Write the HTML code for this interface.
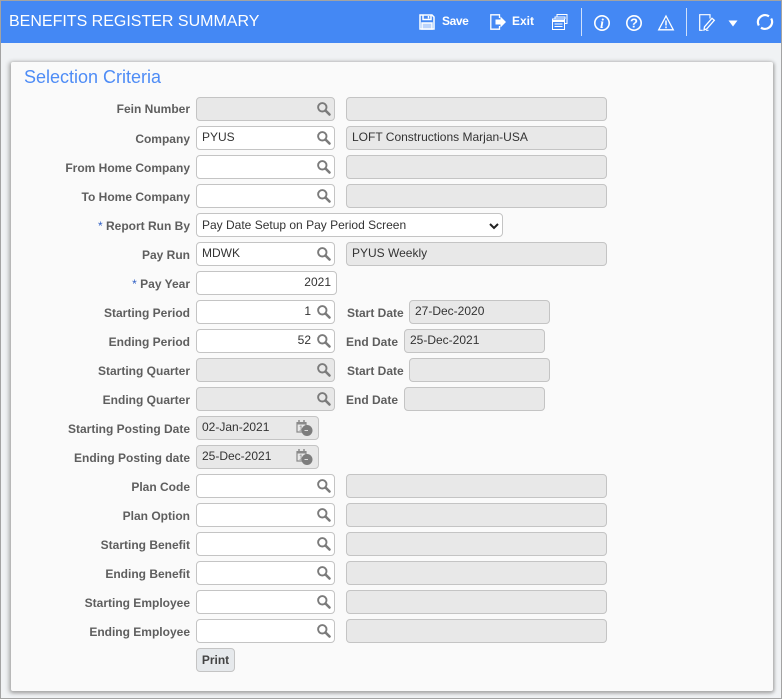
<!DOCTYPE html>
<html><head><meta charset="utf-8"><style>
html,body{margin:0;padding:0}
body{width:782px;height:699px;position:relative;overflow:hidden;background:#f0f2f4;font-family:"Liberation Sans",sans-serif}
.frame{position:absolute;left:0;top:0;width:780px;height:697px;border:1px solid #a3a3a3;pointer-events:none;z-index:5}
.hdr{position:absolute;left:1px;top:1px;width:780px;height:42px;background:#4488f4}
.title{position:absolute;left:9px;top:13px;font-size:16px;color:#fff;white-space:nowrap;line-height:18px}
.panel{position:absolute;left:11px;top:62px;width:762px;height:629px;background:#fafafa;border-radius:2px;box-shadow:-1px 1px 4px 1px #aaa,1px 1px 3px #aaa}
.sc{position:absolute;left:24px;top:67px;font-size:18px;line-height:20px;color:#4e8cf6;white-space:nowrap}
.l{position:absolute;font-size:12px;font-weight:bold;color:#5e5e5e;line-height:14px;white-space:nowrap;text-align:right}
.l.m{width:190px;left:0}
.l i{font-style:normal;color:#2f5fc4;font-weight:normal}
.f{position:absolute;box-sizing:border-box;height:24px;border:1px solid #c4c4c4;border-radius:4px;background:#fff;font-size:12px;line-height:21px;color:#333;padding:0 5px;white-space:nowrap;overflow:hidden}
.g{background:#e8e8e8}
.r{text-align:right;padding-right:5px}
.s{left:196px;width:139px}
.w{left:346px;width:261px}
.v{position:absolute;color:#fff;font-size:12px;font-weight:bold;line-height:14px;top:14px}
.sep{position:absolute;top:8px;width:1px;height:28px;background:#cfe0fb}
svg{position:absolute;overflow:visible}
</style></head><body>
<div class="hdr"></div>
<div class="title">BENEFITS REGISTER SUMMARY</div>

<svg style="left:419px;top:14px" width="16" height="16" viewBox="0 0 16 16" fill="none" stroke="#fff" stroke-width="1.500"><path d="M1 1h12l2 2v12H1z"/><path d="M4 1v4.500h8V1"/><path d="M9.500 2v2.500"/><rect x="3" y="9" width="10" height="6" fill="#bcd4fb" stroke="#fff"/></svg>
<div class="v" style="left:442px;letter-spacing:-.4px">Save</div>
<svg style="left:490px;top:14px" width="17" height="16" viewBox="0 0 17 16" fill="none"><path d="M9.500 4V.8H.8v14.400h8.700V12" stroke="#fff" stroke-width="1.300"/><path d="M5.500 5.500h5V2.500L16 8l-5.500 5.500v-3h-5z" fill="#fff"/></svg>
<div class="v" style="left:512px">Exit</div>
<svg style="left:552px;top:14px" width="16" height="16" viewBox="0 0 16 16" fill="none" stroke="#fff" stroke-width="1"><path d="M5 3V.5h10v9h-2"/><path d="M3 5V3h10v2"/><rect x=".5" y="5" width="12" height="10.500" fill="#4488f4"/><path d="M.5 7h12" stroke-width="2"/><path d="M2.500 10h8M2.500 12.500h8"/></svg>
<div class="sep" style="left:581px"></div>
<svg style="left:594px;top:15px" width="16" height="16" viewBox="0 0 16 16" fill="none"><circle cx="8" cy="8" r="7.200" stroke="#fff" stroke-width="1.600"/><text x="8" y="13" font-family="Liberation Serif,serif" font-style="italic" font-weight="bold" font-size="14" fill="#fff" text-anchor="middle">i</text></svg>
<svg style="left:626px;top:15px" width="16" height="16" viewBox="0 0 16 16" fill="none"><circle cx="8" cy="8" r="7.200" stroke="#fff" stroke-width="1.600"/><text x="8" y="12.700" font-family="Liberation Sans,sans-serif" font-weight="bold" font-size="13" fill="#fff" text-anchor="middle">?</text></svg>
<svg style="left:658px;top:15px" width="16" height="16" viewBox="0 0 16 16" fill="none"><path d="M8 1 15.300 14.800H.7z" stroke="#fff" stroke-width="1.300"/><path d="M8 5.500v5M8 11.500v1.800" stroke="#fff" stroke-width="1.500"/></svg>
<div class="sep" style="left:686px"></div>
<svg style="left:699px;top:14px" width="16" height="17" viewBox="0 0 16 17" fill="none" stroke="#fff" stroke-width="1.200"><path d="M11 4.500V.7H.7v15.600h3"/><path d="M5 16 5.500 12.800 13 4.300l2.300 2-7.500 8.500z" stroke-width="1.300"/><path d="M9.500 16.300h-2.500" stroke-width="1"/></svg>
<svg style="left:728px;top:20px" width="10" height="7" viewBox="0 0 10 7"><path d="M.5 .5h9L5 6.500z" fill="#fff"/></svg>
<svg style="left:757px;top:14px" width="16" height="16" viewBox="0 0 16 16" fill="none" stroke="#fff" stroke-width="2.200"><path d="M1.800 11.500A6.800 6.800 0 0 1 4 2.400 7 7 0 0 1 12 2.300"/><path d="M14.200 4.500A6.800 6.800 0 0 1 12 13.600 7 7 0 0 1 4 13.700"/></svg>

<div class="panel"></div>
<div class="sc">Selection Criteria</div>

<svg width="0" height="0" style="position:absolute"><defs><g id="mag"><circle cx="5.300" cy="5.300" r="4.200" fill="none" stroke="#7b7b7b" stroke-width="1.900"/><path d="M8.500 8.500l4 4" stroke="#7b7b7b" stroke-width="2.600" stroke-linecap="round"/></g>
<g id="cal"><path d="M1 3h9v9H1z" fill="none" stroke="#8a8a8a" stroke-width="1.200"/><path d="M.5 2h10v2.500H.5z" fill="#8a8a8a"/><path d="M3 0v3M8 0v3" stroke="#8a8a8a" stroke-width="1.500"/><text x="3" y="10.500" font-size="7" font-family="Liberation Sans,sans-serif" fill="#777">1</text><circle cx="11" cy="10.500" r="5.500" fill="#7d7d7d"/><path d="M8.500 10.500h3.500" stroke="#ddd" stroke-width="1"/></g></defs></svg>

<div class="l m" style="top:102px">Fein Number</div>
<div class="f s g" style="top:97px"></div><div class="f w g" style="top:97px"></div>
<div class="l m" style="top:132px">Company</div>
<div class="f s" style="top:126px">PYUS</div><div class="f w g" style="top:126px">LOFT Constructions Marjan-USA</div>
<div class="l m" style="top:161px">From Home Company</div>
<div class="f s" style="top:155px"></div><div class="f w g" style="top:155px"></div>
<div class="l m" style="top:190px">To Home Company</div>
<div class="f s" style="top:184px"></div><div class="f w g" style="top:184px"></div>
<div class="l m" style="top:219px"><i>*</i> Report Run By</div>
<div class="f" style="top:213px;left:196px;width:307px;line-height:22px">Pay Date Setup on Pay Period Screen</div>
<svg style="left:489px;top:223px" width="10" height="6" viewBox="0 0 10 6"><path d="M1 1l4 4 4-4" fill="none" stroke="#222" stroke-width="2"/></svg>
<div class="l m" style="top:248px">Pay Run</div>
<div class="f s" style="top:242px">MDWK</div><div class="f w g" style="top:242px">PYUS Weekly</div>
<div class="l m" style="top:277px"><i>*</i> Pay Year</div>
<div class="f r" style="top:271px;left:196px;width:141px">2021</div>
<div class="l m" style="top:306px">Starting Period</div>
<div class="f s r" style="top:300px;padding-right:23px">1</div>
<div class="l" style="top:306px;left:347px">Start Date</div>
<div class="f g" style="top:300px;left:409px;width:141px">27-Dec-2020</div>
<div class="l m" style="top:335px">Ending Period</div>
<div class="f s r" style="top:329px;padding-right:23px">52</div>
<div class="l" style="top:335px;left:346px">End Date</div>
<div class="f g" style="top:329px;left:404px;width:141px">25-Dec-2021</div>
<div class="l m" style="top:364px">Starting Quarter</div>
<div class="f s g" style="top:358px"></div>
<div class="l" style="top:364px;left:347px">Start Date</div>
<div class="f g" style="top:358px;left:409px;width:141px"></div>
<div class="l m" style="top:393px">Ending Quarter</div>
<div class="f s g" style="top:387px"></div>
<div class="l" style="top:393px;left:346px">End Date</div>
<div class="f g" style="top:387px;left:404px;width:141px"></div>
<div class="l m" style="top:422px">Starting Posting Date</div>
<div class="f g" style="top:416px;left:196px;width:123px">02-Jan-2021</div>
<div class="l m" style="top:451px">Ending Posting date</div>
<div class="f g" style="top:445px;left:196px;width:123px">25-Dec-2021</div>
<div class="l m" style="top:480px">Plan Code</div>
<div class="f s" style="top:474px"></div><div class="f w g" style="top:474px"></div>
<div class="l m" style="top:509px">Plan Option</div>
<div class="f s" style="top:503px"></div><div class="f w g" style="top:503px"></div>
<div class="l m" style="top:538px">Starting Benefit</div>
<div class="f s" style="top:532px"></div><div class="f w g" style="top:532px"></div>
<div class="l m" style="top:567px">Ending Benefit</div>
<div class="f s" style="top:561px"></div><div class="f w g" style="top:561px"></div>
<div class="l m" style="top:596px">Starting Employee</div>
<div class="f s" style="top:590px"></div><div class="f w g" style="top:590px"></div>
<div class="l m" style="top:625px">Ending Employee</div>
<div class="f s" style="top:619px"></div><div class="f w g" style="top:619px"></div>
<div class="f g" style="top:648px;left:196px;width:39px;background:#e6e9ec;font-weight:bold;color:#444;text-align:center;padding:0;line-height:22px">Print</div>

<svg style="left:317px;top:102px" width="14" height="14"><use href="#mag"/></svg>
<svg style="left:317px;top:131px" width="14" height="14"><use href="#mag"/></svg>
<svg style="left:317px;top:160px" width="14" height="14"><use href="#mag"/></svg>
<svg style="left:317px;top:189px" width="14" height="14"><use href="#mag"/></svg>
<svg style="left:317px;top:247px" width="14" height="14"><use href="#mag"/></svg>
<svg style="left:317px;top:305px" width="14" height="14"><use href="#mag"/></svg>
<svg style="left:317px;top:334px" width="14" height="14"><use href="#mag"/></svg>
<svg style="left:317px;top:363px" width="14" height="14"><use href="#mag"/></svg>
<svg style="left:317px;top:392px" width="14" height="14"><use href="#mag"/></svg>
<svg style="left:317px;top:479px" width="14" height="14"><use href="#mag"/></svg>
<svg style="left:317px;top:508px" width="14" height="14"><use href="#mag"/></svg>
<svg style="left:317px;top:537px" width="14" height="14"><use href="#mag"/></svg>
<svg style="left:317px;top:566px" width="14" height="14"><use href="#mag"/></svg>
<svg style="left:317px;top:595px" width="14" height="14"><use href="#mag"/></svg>
<svg style="left:317px;top:624px" width="14" height="14"><use href="#mag"/></svg>
<svg style="left:296px;top:420px" width="17" height="16"><use href="#cal"/></svg>
<svg style="left:296px;top:449px" width="17" height="16"><use href="#cal"/></svg>
<div class="frame"></div>
</body></html>
